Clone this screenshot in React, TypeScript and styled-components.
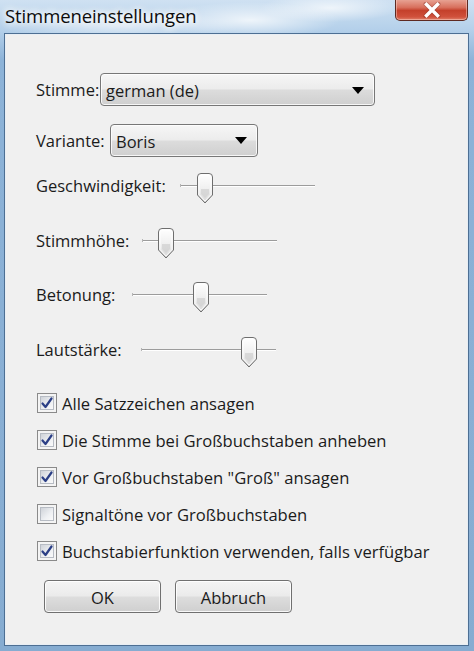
import React from 'react';
import styled, { createGlobalStyle } from 'styled-components';

const Global = createGlobalStyle`
  html, body { margin: 0; padding: 0; }
  body {
    width: 474px; height: 651px; overflow: hidden;
    font-family: "Open Sans", "Noto Sans", sans-serif;
    color: #1b1b1b;
  }
`;

const Window = styled.div`
  width: 474px;
  height: 651px;
  box-sizing: border-box;
  display: flex;
  flex-direction: column;
  padding: 0 5px 5px 4px;
  background:
    radial-gradient(ellipse 90px 18px at 250px 20px, rgba(255,255,255,0.75), rgba(255,255,255,0) 100%),
    radial-gradient(ellipse 70px 14px at 330px 8px, rgba(255,255,255,0.7), rgba(255,255,255,0) 100%),
    radial-gradient(ellipse 120px 16px at 120px 26px, rgba(255,255,255,0.55), rgba(255,255,255,0) 100%),
    linear-gradient(180deg, #cfe1f2 0px, #b4d0ea 30px, #8db3d8 60px, #86acd1 100%);
`;

const TitleBar = styled.div`
  height: 33px;
  display: flex;
  justify-content: space-between;
  align-items: flex-start;
  flex-shrink: 0;
`;

const Title = styled.div`
  font-size: 18.5px;
  line-height: 32px;
  padding-left: 1px;
  color: #0c0c0c;
  letter-spacing: -0.1px;
  text-shadow: 0 0 6px #fff, 0 0 8px #fff, 0 0 10px rgba(255,255,255,0.9);
`;

const CloseButton = styled.div`
  width: 73px;
  height: 22px;
  margin-top: -1px;
  margin-right: 1px;
  box-sizing: border-box;
  border: 1px solid #5e2a22;
  border-top: none;
  border-radius: 0 0 5px 5px;
  background: linear-gradient(180deg, #e9a899 0%, #d8705d 40%, #c4402b 55%, #d0513c 85%, #e0806a 100%);
  box-shadow: inset 0 0 0 1px rgba(255,220,210,0.45);
  display: flex;
  align-items: center;
  justify-content: center;
`;

const Client = styled.div`
  flex: 1;
  background: #f0f0f0;
  border: 1px solid #4d6f93;
  box-shadow: inset 0 0 0 1px #e8eef4;
  padding: 39px 0 0 31px;
  display: flex;
  flex-direction: column;
  align-items: flex-start;
`;

const Row = styled.div<{ $mt: number; $h: number }>`
  display: flex;
  align-items: center;
  margin-top: ${p => p.$mt}px;
  height: ${p => p.$h}px;
`;

const SliderRowBox = styled.div<{ $mt: number }>`
  display: flex;
  align-items: flex-start;
  margin-top: ${p => p.$mt}px;
  height: 31px;
`;

const Label = styled.div<{ $w: number }>`
  width: ${p => p.$w}px;
  flex-shrink: 0;
  font-size: 16.5px;
  white-space: nowrap;
`;

const SliderLabel = styled(Label)`
  line-height: 25px;
`;

const Combo = styled.div<{ $w: number }>`
  width: ${p => p.$w}px;
  height: 33px;
  box-sizing: border-box;
  border: 1px solid #777;
  border-radius: 4px;
  background: linear-gradient(180deg, #f6f6f6 0%, #ececec 48%, #dcdcdc 52%, #cfcfcf 100%);
  box-shadow: inset 0 0 0 1px rgba(255,255,255,0.8);
  display: flex;
  align-items: center;
  padding: 2px 10px 0 5px;
  font-size: 16.5px;
`;

const ComboText = styled.span`
  flex: 1;
`;

const Arrow = styled.div`
  width: 0;
  height: 0;
  border-left: 6px solid transparent;
  border-right: 6px solid transparent;
  border-top: 7px solid #000;
  margin-top: -1px;
`;

const Track = styled.div`
  position: relative;
  width: 135px;
  height: 31px;
`;

const TrackLine = styled.div`
  position: absolute;
  left: 0;
  right: 0;
  top: 12px;
  height: 1px;
  background: #9c9c9c;
  border-bottom: 1px solid #ffffff;
  &::before {
    content: "";
    position: absolute;
    left: 0;
    top: -1px;
    width: 1px;
    height: 3px;
    background: #b5b5b5;
  }
`;

const ThumbBox = styled.div`
  position: absolute;
  top: 0;
  width: 18px;
  height: 31px;
`;

const CheckList = styled.div`
  display: flex;
  flex-direction: column;
  gap: 13px;
  margin-top: 23px;
  margin-left: 1px;
`;

const CheckRow = styled.div`
  display: flex;
  align-items: center;
  height: 24px;
  gap: 5px;
  font-size: 16.6px;
  white-space: nowrap;
`;

const Box = styled.div`
  width: 20px;
  height: 20px;
  box-sizing: border-box;
  border: 1px solid #8a8a8a;
  background: #f4f4f4;
  padding: 2px;
  flex-shrink: 0;
`;

const BoxInner = styled.div`
  width: 100%;
  height: 100%;
  box-sizing: border-box;
  border: 1px solid #b7bcc4;
  background: linear-gradient(135deg, #cfd3d9 0%, #eef0f3 60%, #fafafa 100%);
  display: flex;
  align-items: center;
  justify-content: center;
`;

const ButtonRow = styled.div`
  display: flex;
  gap: 14px;
  margin-top: 17px;
  margin-left: 8px;
`;

const Button = styled.div`
  width: 117px;
  height: 33px;
  box-sizing: border-box;
  border: 1px solid #707070;
  border-radius: 4px;
  background: linear-gradient(180deg, #f4f4f4 0%, #ebebeb 48%, #dddddd 52%, #cfcfcf 100%);
  box-shadow: inset 0 0 0 1px rgba(255,255,255,0.85);
  display: flex;
  align-items: center;
  justify-content: center;
  font-size: 16.5px;
  padding-top: 1px;
`;

const Thumb: React.FC = () => (
  <svg width="18" height="31" viewBox="0 0 18 31">
    <defs>
      <linearGradient id="tg" x1="0" y1="0" x2="0" y2="1">
        <stop offset="0" stopColor="#ffffff" />
        <stop offset="0.5" stopColor="#f0f0f0" />
        <stop offset="1" stopColor="#d6d6d6" />
      </linearGradient>
    </defs>
    <path d="M1.5 4 Q1.5 0.5 5 0.5 H13 Q16.5 0.5 16.5 4 V22 L9 30 L1.5 22 Z" fill="url(#tg)" stroke="#6e6e6e" strokeWidth="1" />
    <path d="M3 4.5 Q3 2 5.5 2 H12.5 Q15 2 15 4.5 V21.5 L9 28 L3 21.5 Z" fill="none" stroke="#ffffff" strokeWidth="1" opacity="0.9" />
    <path d="M5 16 H13 V21 L9 25 L5 21 Z" fill="#d0d0d0" opacity="0.7" />
  </svg>
);

const CheckMark: React.FC = () => (
  <svg width="12" height="12" viewBox="0 0 12 12">
    <path d="M1.5 6.5 L4.5 10 L10.5 1.5" fill="none" stroke="#2b3f86" strokeWidth="2.2" strokeLinecap="round" strokeLinejoin="round" />
  </svg>
);

const Slider: React.FC<{ label: string; labelW: number; mt: number; pos: number }> = ({ label, labelW, mt, pos }) => (
  <SliderRowBox $mt={mt}>
    <SliderLabel $w={labelW}>{label}</SliderLabel>
    <Track>
      <TrackLine />
      <ThumbBox style={{ left: `${pos}px` }}>
        <Thumb />
      </ThumbBox>
    </Track>
  </SliderRowBox>
);

const Check: React.FC<{ checked: boolean; label: string }> = ({ checked, label }) => (
  <CheckRow>
    <Box>
      <BoxInner>{checked && <CheckMark />}</BoxInner>
    </Box>
    <span>{label}</span>
  </CheckRow>
);

export default function App() {
  return (
    <>
      <Global />
      <Window>
        <TitleBar>
          <Title>Stimmeneinstellungen</Title>
          <CloseButton>
            <svg width="20" height="16" viewBox="0 0 20 16">
              <path d="M4 2 L16 14 M16 2 L4 14" stroke="#7a2a20" strokeWidth="5" strokeLinecap="round" opacity="0.35" />
              <path d="M4.5 2.5 L15.5 13.5 M15.5 2.5 L4.5 13.5" stroke="#ffffff" strokeWidth="3.4" strokeLinecap="square" />
            </svg>
          </CloseButton>
        </TitleBar>
        <Client>
          <Row $mt={0} $h={33}>
            <Label $w={64}>Stimme:</Label>
            <Combo $w={275}>
              <ComboText>german (de)</ComboText>
              <Arrow />
            </Combo>
          </Row>
          <Row $mt={17} $h={34}>
            <Label $w={74}>Variante:</Label>
            <Combo $w={148}>
              <ComboText>Boris</ComboText>
              <Arrow />
            </Combo>
          </Row>
          <Slider label="Geschwindigkeit:" labelW={144} mt={16} pos={16} />
          <Slider label="Stimmhöhe:" labelW={106} mt={24} pos={15} />
          <Slider label="Betonung:" labelW={96} mt={23} pos={60} />
          <Slider label="Lautstärke:" labelW={105} mt={24} pos={99} />
          <CheckList>
            <Check checked label="Alle Satzzeichen ansagen" />
            <Check checked label="Die Stimme bei Großbuchstaben anheben" />
            <Check checked label='Vor Großbuchstaben "Groß" ansagen' />
            <Check checked={false} label="Signaltöne vor Großbuchstaben" />
            <Check checked label="Buchstabierfunktion verwenden, falls verfügbar" />
          </CheckList>
          <ButtonRow>
            <Button>OK</Button>
            <Button>Abbruch</Button>
          </ButtonRow>
        </Client>
      </Window>
    </>
  );
}
